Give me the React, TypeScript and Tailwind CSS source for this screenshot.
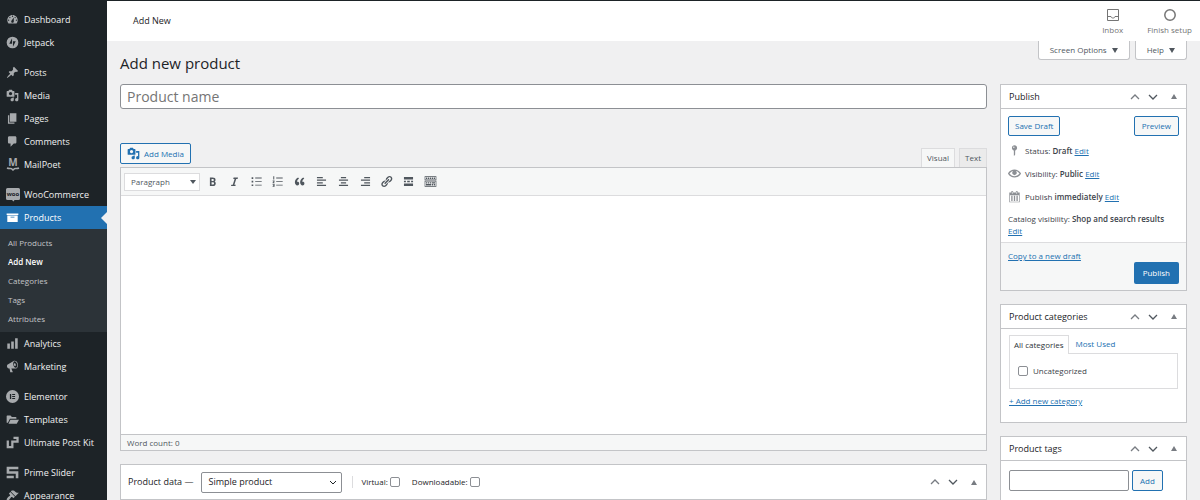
import React, { useState } from "react";

const paths = {
  dashboard:
    "M3.76 16h12.48c1.1-1.37 1.76-3.11 1.76-5 0-4.42-3.58-8-8-8s-8 3.58-8 8c0 1.89.66 3.63 1.76 5zM10 4c.55 0 1 .45 1 1s-.45 1-1 1-1-.45-1-1 .45-1 1-1zM6 6c.55 0 1 .45 1 1s-.45 1-1 1-1-.45-1-1 .45-1 1-1zm8 0c.55 0 1 .45 1 1s-.45 1-1 1-1-.45-1-1 .45-1 1-1zm-5.37 5.55L12 7v6c0 1.1-.9 2-2 2s-2-.9-2-2c0-.57.24-1.08.63-1.45zM4 10c.55 0 1 .45 1 1s-.45 1-1 1-1-.45-1-1 .45-1 1-1zm12 0c.55 0 1 .45 1 1s-.45 1-1 1-1-.45-1-1 .45-1 1-1z",
  jetpack: "M10 1a9 9 0 1 0 0 18 9 9 0 0 0 0-18zM9.3 12H5l4.3-8.4V12zm1.4 4.4V8H15l-4.3 8.4z",
  pin: "M10.44 3.02l1.82-1.82 6.36 6.35-1.83 1.82c-1.05-.68-2.48-.57-3.41.36l-.75.75c-.92.93-1.04 2.35-.35 3.41l-1.83 1.82-2.41-2.41-2.8 2.79c-.42.42-3.38 2.71-3.8 2.29s1.86-3.39 2.28-3.81l2.79-2.79L4.1 9.36l1.83-1.82c1.05.69 2.48.57 3.4-.36l.75-.75c.93-.92 1.05-2.35.36-3.41z",
  media:
    "M13 11V4c0-.55-.45-1-1-1h-1.67L9 1H5L3.67 3H2c-.55 0-1 .45-1 1v7c0 .55.45 1 1 1h10c.55 0 1-.45 1-1zM7 4.5c1.38 0 2.5 1.12 2.5 2.5S8.38 9.5 7 9.5 4.5 8.38 4.5 7 5.62 4.5 7 4.5zM14 6h5v10.5c0 1.38-1.12 2.5-2.5 2.5S14 17.88 14 16.5s1.12-2.5 2.5-2.5c.17 0 .34.02.5.05V9h-3V6zm-4 8.05V13h2v3.5c0 1.38-1.12 2.5-2.5 2.5S7 17.88 7 16.5 8.12 14 9.5 14c.17 0 .34.02.5.05z",
  page: "M6 15V2h10v13H6zm-1 1h8v2H3V5h2v11z",
  comment: "M5 2h9c1.1 0 2 .9 2 2v7c0 1.1-.9 2-2 2h-2l-5 5v-5H5c-1.1 0-2-.9-2-2V4c0-1.1.9-2 2-2z",
  archive: "M19 4v2H1V4h18zM2 7h16v10H2V7zm11 3V9H7v1h6z",
  chart: "M18 18V2h-4v16h4zm-6 0V7H8v11h4zm-6 0v-8H2v8h4z",
  megaphone:
    "M18.15 5.94c.46 1.62.38 3.22-.02 4.48-.42 1.28-1.26 2.18-2.3 2.48-.16.06-.26.06-.4.06-.06.02-.12.02-.18.02-.06.02-.14.02-.22.02h-6.8l2.22 5.5c.02.14-.06.26-.14.34-.08.1-.24.16-.34.16H6.95c-.1 0-.26-.06-.34-.16-.08-.08-.16-.2-.14-.34l-1-5.5H4.25l-.02-.02c-.5.06-1.08-.18-1.54-.62s-.88-1.08-1.06-1.88c-.24-.8-.2-1.56-.02-2.2.18-.62.58-1.08 1.06-1.3l.02-.02 9-5.4c.1-.06.18-.1.24-.16.06-.04.14-.08.24-.12.16-.08.28-.12.5-.18 1.04-.3 2.24.1 3.22.98s1.84 2.24 2.26 3.86zm-2.58 5.98h-.02c.4-.1.74-.34 1.04-.7.58-.7.86-1.76.86-3.04 0-.64-.1-1.3-.28-1.98-.34-1.36-1.02-2.5-1.78-3.24s-1.68-1.1-2.46-.88c-.82.22-1.4.96-1.7 2-.32 1.04-.28 2.36.06 3.72.38 1.36 1 2.5 1.8 3.24.78.74 1.62 1.1 2.48.88zm-2.54-7.08c.22-.04.42-.02.62.04.38.16.76.48 1.02 1s.42 1.2.42 1.78c0 .3-.04.56-.12.8-.18.48-.44.84-.86.94-.34.1-.8-.06-1.14-.4s-.64-.86-.78-1.5c-.18-.62-.12-1.24.02-1.72s.48-.84.82-.94z",
  elementor: "M10 0a10 10 0 1 0 0 20 10 10 0 0 0 0-20zM8 14H6V6h2v8zm6 0H9.500v-1.800H14V14zm0-3.100H9.500V9.100H14v1.800zm0-3.100H9.500V6H14v1.800z",
  folder: "M1 15V5c0-.6.4-1 1-1h5l2 2h6c.6 0 1 .4 1 1v2H6l-3 6H1zm2.800 1.500L6.800 10.500H20l-3.500 6H3.800z",
  postKit: "M1 7h3.500v8.500H8V7h8V4.500h-4.500V1H19.500v9.500H11.500V19H1V7z",
  primeSlider: "M1 1h18v4H5v3h14v11h-4v-7H1V1zm0 14h11v4H1v-4z",
  brush: "M14.48 11.06L7.41 3.99l1.5-1.5c.5-.56 2.3-.47 3.51.32 1.21.8 1.43 1.28 2.91 2.1 1.18.64 2.45 1.26 4.45.85zm-.71.71L6.7 4.7 4.93 6.47c-.39.39-.39 1.02 0 1.41l1.06 1.06c.39.39.39 1.03 0 1.42-.6.6-1.43 1.11-2.21 1.69-.35.26-.7.53-1.01.84C1.43 14.23.4 16.08 1.4 17.07c.99 1 2.84-.03 4.18-1.36.31-.31.58-.66.85-1.02.57-.78 1.08-1.61 1.69-2.21.39-.39 1.02-.39 1.41 0l1.06 1.06c.39.39 1.02.39 1.41 0z",
  postStatus: "M14 6c0 1.86-1.28 3.41-3 3.86V16c0 1-2 2-2 2V9.86c-1.72-.45-3-2-3-3.86 0-2.21 1.79-4 4-4s4 1.79 4 4zM8 5c0 .55.45 1 1 1s1-.45 1-1-.45-1-1-1-1 .45-1 1z",
  eye: "M19.7 9.4C17.7 6 14 3.9 10 3.9S2.3 6 .3 9.4L0 10l.3.6c2 3.4 5.7 5.5 9.7 5.5s7.7-2.1 9.700-5.500l.3-.6-.3-.6zM10 14.1c-3.1 0-6-1.6-7.7-4.1C3.600 8 5.700 6.600 8 6.100c-.9.6-1.5 1.7-1.5 2.9 0 1.900 1.600 3.500 3.500 3.500s3.500-1.600 3.500-3.500c0-1.200-.6-2.300-1.500-2.900 2.300.5 4.400 1.900 5.700 3.900-1.700 2.500-4.600 4.100-7.700 4.100z",
  calendar:
    "M15 4h3v15H2V4h3V3c0-.41.15-.76.44-1.06.29-.29.65-.44 1.06-.44s.77.15 1.06.44c.29.3.44.65.44 1.06v1h4V3c0-.41.15-.76.44-1.06.29-.29.65-.44 1.06-.44s.77.15 1.06.44c.29.3.44.65.44 1.06v1zM6 3v2.500c0 .14.05.26.15.36.09.09.21.14.35.14s.26-.05.35-.14c.1-.1.15-.22.15-.36V3c0-.14-.05-.26-.15-.35-.09-.1-.21-.15-.35-.15s-.26.05-.35.15c-.1.09-.15.21-.15.35zm7 0v2.500c0 .14.05.26.14.36.1.09.22.14.36.14s.26-.05.36-.14c.09-.1.14-.22.14-.36V3c0-.14-.05-.26-.14-.35-.1-.1-.22-.15-.36-.15s-.26.05-.36.15c-.09.09-.14.21-.14.35zm4 15V8H3v10h14zM5 9h2v8H5V9zm4 0h2v8H9V9zm4 0h2v8h-2V9z",
  bold: "M6 4v13h4.54c1.37 0 2.46-.33 3.26-1 .8-.66 1.2-1.58 1.2-2.77 0-.84-.17-1.51-.51-2.01s-.9-.85-1.67-1.03v-.09c.57-.1 1.02-.4 1.36-.9s.51-1.13.51-1.91c0-1.14-.39-1.98-1.17-2.5C12.75 4.26 11.5 4 9.78 4H6zm2.57 5.15V6.26h1.36c.73 0 1.27.11 1.61.32.34.22.51.58.51 1.07 0 .54-.16.92-.47 1.15s-.82.35-1.51.35h-1.5zm0 2.19h1.6c1.44 0 2.16.53 2.16 1.61 0 .6-.17 1.05-.51 1.34s-.86.43-1.57.43H8.57v-3.38z",
  italic: "M14.78 6h-2.13l-2.8 9h2.12l-.62 2H4.6l.62-2h2.14l2.8-9H8.03l.62-2h6.75z",
  bulleted: "M2.500 3.500h2.500v2.500H2.500V3.500zM8 4h10v1.300H8V4zM2.500 9h2.500v2.500H2.500V9zM8 9.500h10v1.300H8V9.500zm-5.500 5h2.500V17H2.500v-2.500zM8 15h10v1.300H8V15z",
  numbered: "M3.500 2H5v5H3.500V2zM8 4h10v1.300H8V4zM2.500 8.500h3V10L4 11.500h1.500v1h-3v-1L4 9.500H2.500v-1zM8 9.500h10v1.300H8V9.500zM2.500 14h3v4h-3v-1h1.800v-.5H3v-1h1.300V15H2.500v-1zM8 15h10v1.300H8V15z",
  quote: "M9.49 13.22c0-.74-.2-1.38-.61-1.9-.62-.78-1.83-.88-2.53-.72-.29-1.65 1.11-3.75 2.92-4.65L7.88 4c-2.73 1.3-5.42 4.28-4.96 8.05C3.21 14.43 4.59 16 6.54 16c.85 0 1.56-.25 2.12-.75s.83-1.18.83-2.03zm8.05 0c0-.74-.2-1.38-.61-1.9-.63-.78-1.83-.88-2.53-.72-.29-1.65 1.11-3.75 2.92-4.65L15.93 4c-2.73 1.3-5.41 4.28-4.95 8.05.29 2.38 1.66 3.95 3.61 3.95.85 0 1.56-.25 2.12-.75s.83-1.18.83-2.03z",
  alignLeft: "M12 5V3H3v2h9zm5 4V7H3v2h14zm-5 4v-2H3v2h9zm5 4v-2H3v2h14z",
  alignCenter: "M14 5V3H6v2h8zm3 4V7H3v2h14zm-3 4v-2H6v2h8zm3 4v-2H3v2h14z",
  alignRight: "M17 5V3H8v2h9zm0 4V7H3v2h14zm0 4v-2H8v2h9zm0 4v-2H3v2h14z",
  link: "M17.74 2.76c1.68 1.69 1.68 4.41 0 6.1l-1.53 1.52c-1.12 1.12-2.7 1.47-4.14 1.09l2.62-2.61.76-.77.76-.76c.84-.84.84-2.2 0-3.04-.84-.85-2.2-.85-3.04 0l-.77.76-3.38 3.38c-.37-1.44-.02-3.02 1.1-4.14l1.52-1.53c1.69-1.68 4.42-1.68 6.1 0zM8.59 13.43l5.34-5.34c.42-.42.42-1.1 0-1.52-.44-.43-1.13-.39-1.53 0l-5.33 5.34c-.42.42-.42 1.1 0 1.52.44.43 1.13.39 1.52 0zm-.76 2.29l4.14-4.15c.38 1.44.03 3.02-1.09 4.14l-1.52 1.53c-1.69 1.68-4.41 1.68-6.1 0-1.68-1.68-1.68-4.42 0-6.1l1.53-1.52c1.12-1.12 2.7-1.47 4.14-1.1l-4.14 4.15c-.85.84-.85 2.2 0 3.05.84.84 2.2.84 3.04 0z",
  more: "M17 7V3H3v4h14zM6 11V9H3v2h3zm6 0V9H8v2h4zm5 0V9h-3v2h3zm0 6v-4H3v4h14z",
  kitchenSink:
    "M19 2v6H1V2h18zm-1 5V3H2v4h16zM5 4v2H3V4h2zm3 0v2H6V4h2zm3 0v2H9V4h2zm3 0v2h-2V4h2zm3 0v2h-2V4h2zm2 5v9H1V9h18zm-1 8v-7H2v7h16zM5 11v2H3v-2h2zm3 0v2H6v-2h2zm3 0v2H9v-2h2zm6 0v2h-5v-2h5zm-6 3v2H3v-2h8zm3 0v2h-2v-2h2zm3 0v2h-2v-2h2z",
};

type IconName = keyof typeof paths;

const Icon: React.FC<{ name: IconName; className?: string }> = ({ name, className = "size-[13px]" }) => (
  <svg viewBox="0 0 20 20" fill="currentColor" fillRule="evenodd" className={`shrink-0 ${className}`} aria-hidden="true">
    <path d={paths[name]} />
  </svg>
);

const WooIcon = () => (
  <svg viewBox="0 0 14 14" className="size-[14px] shrink-0" aria-hidden="true">
    <path fill="currentColor" d="M1.500 0h11A1.500 1.500 0 0 1 14 1.500v9a1.500 1.500 0 0 1-1.500 1.500H8.500L7.500 13.500 6 12H1.500A1.500 1.500 0 0 1 0 10.500v-9A1.500 1.500 0 0 1 1.500 0z" />
    <text x="7" y="8" textAnchor="middle" fontSize="6" fontWeight="700" fill="#1d2327">woo</text>
  </svg>
);

const MailPoetIcon = () => (
  <svg viewBox="0 0 14 14" className="size-[14px] shrink-0 overflow-visible" aria-hidden="true">
    <text x="7" y="8" textAnchor="middle" fontSize="10" fontWeight="700" fill="currentColor">M</text>
    <path d="M1 10c2 1 3.500.2 4.500.7L7 12l1.500-1.300c1-.5 2.500.3 4.500-.7" fill="none" stroke="currentColor" strokeWidth="1.500" />
  </svg>
);

const menuGroups: { label: string; icon: IconName | "woo" | "mailpoet"; sub?: string[] }[][] = [
  [
    { label: "Dashboard", icon: "dashboard" },
    { label: "Jetpack", icon: "jetpack" },
  ],
  [
    { label: "Posts", icon: "pin" },
    { label: "Media", icon: "media" },
    { label: "Pages", icon: "page" },
    { label: "Comments", icon: "comment" },
    { label: "MailPoet", icon: "mailpoet" },
  ],
  [
    { label: "WooCommerce", icon: "woo" },
    { label: "Products", icon: "archive", sub: ["All Products", "Add New", "Categories", "Tags", "Attributes"] },
    { label: "Analytics", icon: "chart" },
    { label: "Marketing", icon: "megaphone" },
  ],
  [
    { label: "Elementor", icon: "elementor" },
    { label: "Templates", icon: "folder" },
    { label: "Ultimate Post Kit", icon: "postKit" },
  ],
  [
    { label: "Prime Slider", icon: "primeSlider" },
    { label: "Appearance", icon: "brush" },
  ],
];

const tools: { name: IconName; label: string }[] = [
  { name: "bold", label: "Bold" },
  { name: "italic", label: "Italic" },
  { name: "bulleted", label: "Bulleted list" },
  { name: "numbered", label: "Numbered list" },
  { name: "quote", label: "Blockquote" },
  { name: "alignLeft", label: "Align left" },
  { name: "alignCenter", label: "Align center" },
  { name: "alignRight", label: "Align right" },
  { name: "link", label: "Insert link" },
  { name: "more", label: "Insert Read More tag" },
  { name: "kitchenSink", label: "Toolbar Toggle" },
];

const SideMenu: React.FC = () => (
  <nav className="flex w-[107px] shrink-0 flex-col gap-[7px] bg-[#1d2327] pt-2 text-[9px] text-[#f0f0f1]">
    {menuGroups.map((group, i) => (
      <ul key={i}>
        {group.map(item => (
          <li key={item.label}>
            <a
              href="#"
              className={`relative flex h-[23px] items-center gap-[5px] pl-[6px] whitespace-nowrap ${item.sub ? "bg-[#2271b1] text-white" : ""}`}
            >
              <span className={`flex w-[13px] justify-center ${item.sub ? "text-white" : "text-[#a7aaad]"}`}>
                {item.icon === "woo" ? <WooIcon /> : item.icon === "mailpoet" ? <MailPoetIcon /> : <Icon name={item.icon} />}
              </span>
              {item.label}
              {item.sub && (
                <span className="absolute top-[6px] right-0 border-y-[6px] border-r-[6px] border-y-transparent border-r-[#f0f0f1]" />
              )}
            </a>
            {item.sub && (
              <ul className="bg-[#2c3338] py-1 text-[8px]">
                {item.sub.map(s => (
                  <li key={s}>
                    <a href="#" className={`flex h-[19px] items-center pl-2 ${s === "Add New" ? "font-semibold text-white" : "text-[#c3c4c7]"}`}>
                      {s}
                    </a>
                  </li>
                ))}
              </ul>
            )}
          </li>
        ))}
      </ul>
    ))}
  </nav>
);

const BoxControls: React.FC = () => (
  <div className="flex items-center text-[#787c82]">
    <button aria-label="Move up" className="flex w-[18px] justify-center">
      <svg viewBox="0 0 10 6" className="h-[6px] w-[10px]" fill="none" stroke="currentColor" strokeWidth="1.300"><path d="M1 5l4-4 4 4" /></svg>
    </button>
    <button aria-label="Move down" className="flex w-[18px] justify-center text-[#50575e]">
      <svg viewBox="0 0 10 6" className="h-[6px] w-[10px]" fill="none" stroke="currentColor" strokeWidth="1.300"><path d="M1 1l4 4 4-4" /></svg>
    </button>
    <button aria-label="Toggle panel" className="flex w-6 justify-center">
      <svg viewBox="0 0 6 5" className="h-[5px] w-[6px]" fill="currentColor"><path d="M3 0l3 5H0z" /></svg>
    </button>
  </div>
);

const Panel: React.FC<{ title: string; children: React.ReactNode }> = ({ title, children }) => (
  <section className="border border-[#c3c4c7] bg-white">
    <div className="flex h-6 items-center justify-between border-b border-[#c3c4c7] pl-2">
      <h2 className="text-[9px] font-medium text-[#1d2327]">{title}</h2>
      <BoxControls />
    </div>
    {children}
  </section>
);

const linkClass = "text-[#2271b1] underline";
const buttonClass = "rounded-[2px] border border-[#2271b1] bg-[#f6f7f7] text-[8px] text-[#2271b1]";
const checkClass = "size-[10px] shrink-0 appearance-none rounded-[2px] border border-[#8c8f94] bg-white checked:bg-[#2271b1]";

const ScreenTab: React.FC<{ label: string }> = ({ label }) => (
  <button className="flex h-[19px] items-center gap-[5px] rounded-b-[3px] border border-t-0 border-[#c3c4c7] bg-white px-[11px] text-[8px] text-[#50575e]">
    {label}
    <svg viewBox="0 0 6 5" className="h-[5px] w-[6px]" fill="currentColor"><path d="M0 0h6L3 5z" /></svg>
  </button>
);

const Editor: React.FC = () => {
  const [content, setContent] = useState("");
  const words = content.trim() ? content.trim().split(/\s+/).length : 0;

  return (
    <div className="mt-[34px]">
      <div className="flex items-end justify-between">
        <button className={`mb-[3px] flex h-[21px] items-center gap-1 px-[6px] ${buttonClass}`}>
          <Icon name="media" />
          Add Media
        </button>
        <div className="flex gap-1 text-[8px] text-[#50575e]">
          <button className="h-[19px] border border-b-0 border-[#dcdcde] bg-[#f6f7f7] px-[5px]">Visual</button>
          <button className="h-[19px] border border-b-0 border-[#dcdcde] bg-[#ebebeb] px-[5px]">Text</button>
        </div>
      </div>
      <div className="border border-[#c3c4c7] bg-white">
        <div className="flex h-7 items-center gap-[6px] border-b border-[#dcdcde] bg-[#f6f7f7] pl-[3px] text-[#50575e]">
          <div className="relative">
            <select aria-label="Paragraph format" className="block h-[18px] w-[76px] appearance-none border border-[#dcdcde] bg-white pl-[6px] text-[8px]">
              <option>Paragraph</option>
              <option>Heading 1</option>
              <option>Heading 2</option>
            </select>
            <svg viewBox="0 0 6 4" className="pointer-events-none absolute top-[7px] right-1 h-1 w-[6px]" fill="currentColor"><path d="M0 0h6L3 4z" /></svg>
          </div>
          <div className="flex w-[231px] justify-between">
            {tools.map(t => (
              <button key={t.name} aria-label={t.label}>
                <Icon name={t.name} />
              </button>
            ))}
          </div>
        </div>
        <textarea
          aria-label="Product description"
          className="block h-[238px] w-full resize-none p-2 text-[9px] focus:outline-none"
          value={content}
          onChange={e => setContent(e.target.value)}
        />
        <div className="flex h-4 items-center border-t border-[#c3c4c7] bg-[#f6f7f7] px-[6px] text-[8px] text-[#50575e]">Word count: {words}</div>
      </div>
    </div>
  );
};

const ProductData: React.FC = () => (
  <section className="mt-[13px] border border-[#c3c4c7] bg-white">
    <div className="flex h-[35px] items-center border-b border-[#c3c4c7] pl-[7px] text-[#1d2327]">
      <label htmlFor="product-type" className="text-[9px] font-medium">Product data —</label>
      <div className="relative ml-2">
        <select id="product-type" className="block h-[21px] w-[141px] appearance-none rounded-[2px] border border-[#8c8f94] bg-white pl-[6px] text-[9px]">
          <option>Simple product</option>
          <option>Grouped product</option>
          <option>Variable product</option>
        </select>
        <svg viewBox="0 0 8 5" className="pointer-events-none absolute top-[8px] right-[5px] h-[5px] w-2" fill="none" stroke="currentColor"><path d="M1 1l3 3 3-3" /></svg>
      </div>
      <div className="ml-[10px] flex items-center gap-3 border-l border-[#dcdcde] pl-2 text-[8px]">
        <label className="flex items-center gap-[2px]">Virtual: <input type="checkbox" className={checkClass} /></label>
        <label className="flex items-center gap-[2px]">Downloadable: <input type="checkbox" className={checkClass} /></label>
      </div>
      <div className="ml-auto"><BoxControls /></div>
    </div>
    <div className="h-40 w-[173px] border-r border-[#eeeeee] bg-[#fafafa]" />
  </section>
);

const PublishBox: React.FC = () => (
  <Panel title="Publish">
    <div className="flex flex-col px-[7px] pt-[7px] text-[8px] text-[#3c434a]">
      <div className="flex justify-between">
        <button className={`h-5 px-[6px] ${buttonClass}`}>Save Draft</button>
        <button className={`h-5 px-[7px] ${buttonClass}`}>Preview</button>
      </div>
      <div className="mt-[3px] flex h-[23px] items-center gap-1">
        <Icon name="postStatus" className="size-[13px] text-[#8c8f94]" />
        <p>Status: <b className="font-semibold">Draft</b> <a href="#" className={linkClass}>Edit</a></p>
      </div>
      <div className="flex h-[23px] items-center gap-1">
        <Icon name="eye" className="size-[13px] text-[#8c8f94]" />
        <p>Visibility: <b className="font-semibold">Public</b> <a href="#" className={linkClass}>Edit</a></p>
      </div>
      <div className="flex h-[23px] items-center gap-1">
        <Icon name="calendar" className="size-[13px] text-[#8c8f94]" />
        <p>Publish <b className="font-semibold">immediately</b> <a href="#" className={linkClass}>Edit</a></p>
      </div>
      <p className="my-[5px] leading-3">
        Catalog visibility: <b className="font-semibold">Shop and search results</b>
        <br />
        <a href="#" className={linkClass}>Edit</a>
      </p>
    </div>
    <div className="flex flex-col border-t border-[#dcdcde] bg-[#f6f7f7] px-[7px] pt-[7px] pb-[6px] text-[8px]">
      <a href="#" className={`leading-3 ${linkClass}`}>Copy to a new draft</a>
      <button className="h-[22px] self-end rounded-[2px] bg-[#2271b1] px-[9px] font-medium text-white">Publish</button>
    </div>
  </Panel>
);

const CategoriesBox: React.FC = () => (
  <Panel title="Product categories">
    <div className="px-2 pt-[6px] pb-[15px] text-[8px]">
      <div className="flex">
        <button className="relative -mb-px h-[19px] border border-b-0 border-[#dcdcde] bg-white px-1 text-[#2c3338]">All categories</button>
        <button className="h-[18px] px-[7px] text-[#2271b1]">Most Used</button>
      </div>
      <div className="border border-[#dcdcde] px-2 py-3">
        <label className="flex h-[10px] items-center gap-[5px] text-[#3c434a]">
          <input type="checkbox" className={checkClass} />
          Uncategorized
        </label>
      </div>
      <a href="#" className={`mt-[6px] block leading-3 ${linkClass}`}>+ Add new category</a>
    </div>
  </Panel>
);

const TagsBox: React.FC = () => (
  <Panel title="Product tags">
    <form className="flex gap-[3px] px-2 pt-[9px] pb-10" onSubmit={e => e.preventDefault()}>
      <input aria-label="Add new tag" className="h-[21px] w-[120px] rounded-[2px] border border-[#8c8f94] bg-white px-1 text-[9px]" />
      <button className={`h-[21px] px-[7px] ${buttonClass}`}>Add</button>
    </form>
  </Panel>
);

const App: React.FC = () => {
  const [name, setName] = useState("");

  return (
    <div className="flex h-screen overflow-hidden bg-[#f0f0f1] font-['Open_Sans','Noto_Sans',sans-serif]">
      <SideMenu />
      <div className="flex min-w-0 grow flex-col overflow-y-auto border-t border-[#1d2327] [scrollbar-width:none]">
        <header className="flex h-10 shrink-0 items-center justify-between bg-white pr-2 pl-[26px] text-[#1d2327]">
          <h1 className="text-[9px] font-medium">Add New</h1>
          <div className="flex gap-6 pt-[2px] text-[8px] text-[#757575]">
            <button className="flex flex-col items-center gap-[3px] leading-3">
              <svg viewBox="0 0 12 12" className="size-3" fill="none" stroke="currentColor"><path d="M.5.5h11v11H.5zM.5 7.500H4c0 2 4 2 4 0h3.500" /></svg>
              Inbox
            </button>
            <button className="flex flex-col items-center gap-[3px] leading-3">
              <svg viewBox="0 0 12 12" className="size-3" fill="none" stroke="currentColor" strokeWidth="1.500"><circle cx="6" cy="6" r="5.200" /></svg>
              Finish setup
            </button>
          </div>
        </header>
        <main className="px-[13px]">
          <div className="flex justify-between">
            <h2 className="pt-3 text-[15px] leading-5 text-[#1d2327]">Add new product</h2>
            <div className="flex gap-[5px]">
              <ScreenTab label="Screen Options" />
              <ScreenTab label="Help" />
            </div>
          </div>
          <div className="mt-[11px] flex gap-[13px]">
            <div className="min-w-0 grow">
              <input
                aria-label="Product name"
                placeholder="Product name"
                className="block h-[25px] w-full rounded-[3px] border border-[#8c8f94] bg-white px-[6px] text-[14px] text-[#2c3338] placeholder:text-[#757575]"
                value={name}
                onChange={e => setName(e.target.value)}
              />
              <Editor />
              <ProductData />
            </div>
            <aside className="flex w-[187px] shrink-0 flex-col gap-[13px]">
              <PublishBox />
              <CategoriesBox />
              <TagsBox />
            </aside>
          </div>
        </main>
      </div>
    </div>
  );
};

export default App;
